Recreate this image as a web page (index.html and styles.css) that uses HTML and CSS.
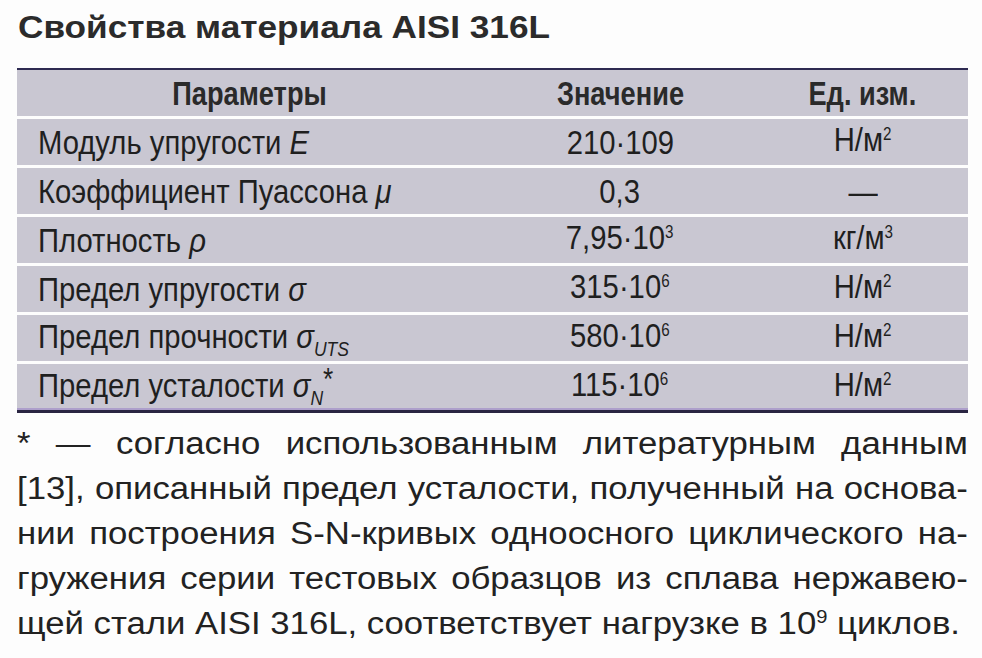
FILE: index.html
```html
<!DOCTYPE html>
<html lang="ru">
<head>
<meta charset="utf-8">
<title>Свойства материала AISI 316L</title>
<link rel="stylesheet" href="styles.css">
</head>
<body>
<div class="page">
  <div class="title-wrap"><h1 class="title">Свойства материала AISI 316L</h1></div>
  <div class="table">
    <div class="row head">
      <div class="cell"><span class="t">Параметры</span></div>
      <div class="cell"><span class="t">Значение</span></div>
      <div class="cell"><span class="t">Ед. изм.</span></div>
    </div>
    <div class="row">
      <div class="cell left"><span class="t">Модуль упругости <i>E</i></span></div>
      <div class="cell"><span class="t">210·109</span></div>
      <div class="cell"><span class="t">Н/м<sup>2</sup></span></div>
    </div>
    <div class="row">
      <div class="cell left"><span class="t">Коэффициент Пуассона <i>μ</i></span></div>
      <div class="cell"><span class="t">0,3</span></div>
      <div class="cell"><span class="t">—</span></div>
    </div>
    <div class="row">
      <div class="cell left"><span class="t">Плотность <i>ρ</i></span></div>
      <div class="cell"><span class="t">7,95·10<sup>3</sup></span></div>
      <div class="cell"><span class="t">кг/м<sup>3</sup></span></div>
    </div>
    <div class="row">
      <div class="cell left"><span class="t">Предел упругости <i>σ</i></span></div>
      <div class="cell"><span class="t">315·10<sup>6</sup></span></div>
      <div class="cell"><span class="t">Н/м<sup>2</sup></span></div>
    </div>
    <div class="row">
      <div class="cell left"><span class="t">Предел прочности <i>σ<sub>UTS</sub></i></span></div>
      <div class="cell"><span class="t">580·10<sup>6</sup></span></div>
      <div class="cell"><span class="t">Н/м<sup>2</sup></span></div>
    </div>
    <div class="row last">
      <div class="cell left"><span class="t">Предел усталости <i>σ<sub>N</sub></i><span class="star">*</span></span></div>
      <div class="cell"><span class="t">115·10<sup>6</sup></span></div>
      <div class="cell"><span class="t">Н/м<sup>2</sup></span></div>
    </div>
  </div>
  <div class="note">
    <div class="line">* — согласно использованным литературным данным</div>
    <div class="line">[13], описанный предел усталости, полученный на основа-</div>
    <div class="line">нии построения S-N-кривых одноосного циклического на-</div>
    <div class="line">гружения серии тестовых образцов из сплава нержавею-</div>
    <div class="line end">щей стали AISI 316L, соответствует нагрузке в 10<sup>9</sup> циклов.</div>
  </div>
</div>
</body>
</html>
```
FILE: styles.css
```css
html, body {
  margin: 0;
  padding: 0;
  background: #fdfdfd;
}
.page {
  width: 982px;
  height: 658px;
  padding: 0 14px 0 17px;
  box-sizing: border-box;
  font-family: "Liberation Sans", Arial, sans-serif;
  color: #1f1f1f;
  overflow: hidden;
}
.title-wrap {
  height: 68px;
  padding-top: 9px;
  box-sizing: border-box;
}
.title {
  display: inline-block;
  margin: 0 0 0 1px;
  font-size: 32px;
  line-height: 36px;
  font-weight: bold;
  color: #2b2b2b;
  transform: scaleX(1.1);
  transform-origin: left center;
}
.table {
  width: 951px;
  border-top: 2px solid #2e2b52;
  border-bottom: 3px solid #2a2542;
  font-size: 34px;
  display: flex;
  flex-direction: column;
  gap: 3px;
  background: #fdfdfd;
}
.row {
  display: grid;
  grid-template-columns: 466px 274px 211px;
  height: 46px;
  background: #c9c7d2;
  align-items: center;
}
.row.last {
  box-shadow: inset 0 -2px 0 #ad9fcb;
}
.head {
  font-weight: bold;
  color: #2a2a2a;
}
.cell {
  text-align: center;
  white-space: nowrap;
  line-height: 40px;
}
.t {
  display: inline-block;
  transform: scaleX(0.86);
  transform-origin: center center;
}
.head .t {
  transform: scaleX(0.8);
}
.cell.left {
  text-align: left;
  padding-left: 21px;
}
.cell.left .t {
  transform-origin: left center;
}
i {
  font-style: italic;
}
sup {
  font-size: 0.52em;
  vertical-align: 0;
  position: relative;
  top: -0.62em;
}
sub {
  font-size: 0.6em;
  vertical-align: 0;
  position: relative;
  top: 0.42em;
}
.star {
  position: relative;
  top: -0.22em;
  font-size: 0.9em;
}
.note {
  width: 849px;
  padding-top: 8px;
  font-size: 31px;
  line-height: 45px;
  color: #222;
  transform: scaleX(1.12);
  transform-origin: left top;
}
.line {
  text-align: justify;
  text-align-last: justify;
  white-space: nowrap;
}
.line.end {
  text-align-last: left;
}
.note sup {
  font-size: 0.58em;
  top: -0.62em;
}
```
